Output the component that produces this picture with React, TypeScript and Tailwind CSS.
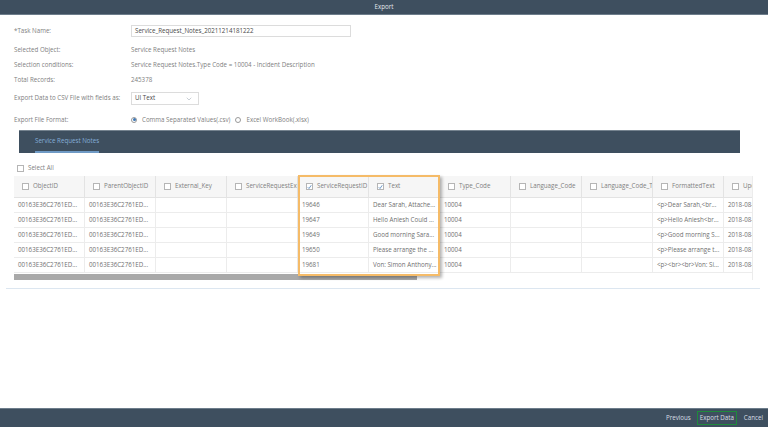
import { ChevronDown } from "lucide-react";

const COLUMNS = [
  { name: "ObjectID" },
  { name: "ParentObjectID" },
  { name: "External_Key" },
  { name: "ServiceRequestExternalID" },
  { name: "ServiceRequestID", checked: true },
  { name: "Text", checked: true },
  { name: "Type_Code" },
  { name: "Language_Code" },
  { name: "Language_Code_Text" },
  { name: "FormattedText" },
  { name: "UpdatedOn" },
];

const ROWS = [
  ["19646", "Dear Sarah, Attache...", "<p>Dear Sarah,<br...", "2018-08-"],
  ["19647", "Hello Aniesh Could ...", "<p>Hello Aniesh<br...", "2018-08-"],
  ["19649", "Good morning Sara...", "<p>Good morning S...", "2018-08-"],
  ["19650", "Please arrange the ...", "<p>Please arrange t...", "2018-08-"],
  ["19681", "Von: Simon Anthony...", "<p><br><br>Von: Si...", "2018-08-"],
];

function Check({ checked }: { checked?: boolean }) {
  return (
    <span className="flex h-[7px] w-[7px] shrink-0 items-center justify-center border border-[#b5b5b5] bg-white">
      {checked && (
        <svg width="6" height="6" viewBox="0 0 10 10" fill="none" stroke="#3f78b5" strokeWidth="1.5">
          <path d="M1.5 5.5l2.5 2.5 4.5-6.5" />
        </svg>
      )}
    </span>
  );
}

function FormRow({ label, children, className }: { label: string; children: React.ReactNode; className?: string }) {
  return (
    <div className={`flex items-center ${className ?? ""}`}>
      <div className="w-[117px] shrink-0 text-[#808080]">{label}</div>
      {children}
    </div>
  );
}

function Cell({ children }: { children?: React.ReactNode }) {
  return (
    <div className="flex h-[15px] w-[71px] shrink-0 items-center overflow-hidden whitespace-nowrap border-r border-b border-[#ececec] pl-[4px] pt-px text-[#707070]">
      {children}
    </div>
  );
}

export default function App() {
  return (
    <div className="flex h-[427px] w-[768px] flex-col overflow-hidden bg-white font-['Open_Sans',sans-serif] text-[6.2px] leading-none">
      <header className="flex h-[15px] shrink-0 items-center justify-center border-b border-[#6d7d8b] bg-[#3e4f5f] text-[#e3e7eb]">
        Export
      </header>

      <section className="px-[14px]">
        <FormRow label="*Task Name:" className="mt-[10px] h-[12px]">
          <div className="flex h-[12px] w-[220px] items-center border border-[#dcdcdc] pl-[3px] text-[#4a4a4a]">
            Service_Request_Notes_20211214181222
          </div>
        </FormRow>
        <FormRow label="Selected Object:" className="mt-[9px] h-[8px]">
          <span className="text-[#808080]">Service Request Notes</span>
        </FormRow>
        <FormRow label="Selection conditions:" className="mt-[7px] h-[8px]">
          <span className="text-[#808080]">Service Request Notes.Type Code = 10004 - Incident Description</span>
        </FormRow>
        <FormRow label="Total Records:" className="mt-[7px] h-[8px]">
          <span className="text-[#808080]">245378</span>
        </FormRow>
        <FormRow label="Export Data to CSV File with fields as:" className="mt-[8px] h-[13px]">
          <div className="flex h-[13px] w-[68px] items-center justify-between border border-[#dcdcdc] pl-[3px] pr-[5px] text-[#4a4a4a]">
            UI Text
            <ChevronDown size={8} strokeWidth={1.25} color="#7b8a99" />
          </div>
        </FormRow>
        <FormRow label="Export File Format:" className="mt-[11px] h-[8px]">
          <div className="flex items-center text-[#808080]">
            <span className="flex h-[6px] w-[6px] items-center justify-center rounded-full border border-[#9a9a9a]">
              <span className="h-[3px] w-[3px] rounded-full bg-[#3f78b5]" />
            </span>
            <span className="ml-[5px]">Comma Separated Values(.csv)</span>
            <span className="ml-[5px] h-[6px] w-[6px] rounded-full border border-[#9a9a9a]" />
            <span className="ml-[5px]">Excel WorkBook(.xlsx)</span>
          </div>
        </FormRow>
      </section>

      <nav className="ml-[19px] mt-[6px] flex h-[23px] w-[721px] shrink-0 items-stretch border-t border-[#75838f] bg-[#3e4f5f] pl-[16px]">
        <div className="flex items-center border-b-2 border-[#6f9ac5] text-[#84aed8]">Service Request Notes</div>
      </nav>

      <label className="ml-[17px] mt-[11px] flex h-[8px] items-center gap-[4px] text-[#808080]">
        <Check />
        Select All
      </label>

      <div className="relative ml-[14px] mt-[4px] w-[739px] shrink-0">
        <div className="overflow-hidden border-r border-[#ececec]">
          <div className="flex h-[22px] border-b border-[#e3e3e3] bg-[#f6f6f6]">
            {COLUMNS.map((c) => (
              <div
                key={c.name}
                className="flex w-[71px] shrink-0 items-center gap-[4px] overflow-hidden whitespace-nowrap border-r border-[#e3e3e3] pl-[8px] text-[#808080]"
              >
                <Check checked={c.checked} />
                {c.name}
              </div>
            ))}
          </div>
          {ROWS.map((r) => (
            <div key={r[0]} className="flex">
              <Cell>00163E36C2761ED...</Cell>
              <Cell>00163E36C2761ED...</Cell>
              <Cell />
              <Cell />
              <Cell>{r[0]}</Cell>
              <Cell>{r[1]}</Cell>
              <Cell>10004</Cell>
              <Cell />
              <Cell />
              <Cell>{r[2]}</Cell>
              <Cell>{r[3]}</Cell>
            </div>
          ))}
          <div className="mt-px h-[6px] w-[403px] bg-[#a9a9a9]" />
        </div>
        <div className="absolute left-[284px] top-[-1px] z-10 h-[101px] w-[142px] border-2 border-[#f5bb68] shadow-[2px_2px_3px_rgba(0,0,0,0.3)]" />
      </div>

      <div className="ml-[6px] mt-[8px] h-px w-[754px] shrink-0 bg-[#dce6f0]" />

      <footer className="mt-auto flex h-[19px] shrink-0 items-center justify-end border-t border-[#6d7d8b] bg-[#3e4f5f] pr-[5px] text-[#d9dfe5]">
        <span className="mr-[6px]">Previous</span>
        <span className="flex h-[14px] items-center border border-[#1f8a3c] px-[2px]">Export Data</span>
        <span className="ml-[7px]">Cancel</span>
      </footer>
    </div>
  );
}
